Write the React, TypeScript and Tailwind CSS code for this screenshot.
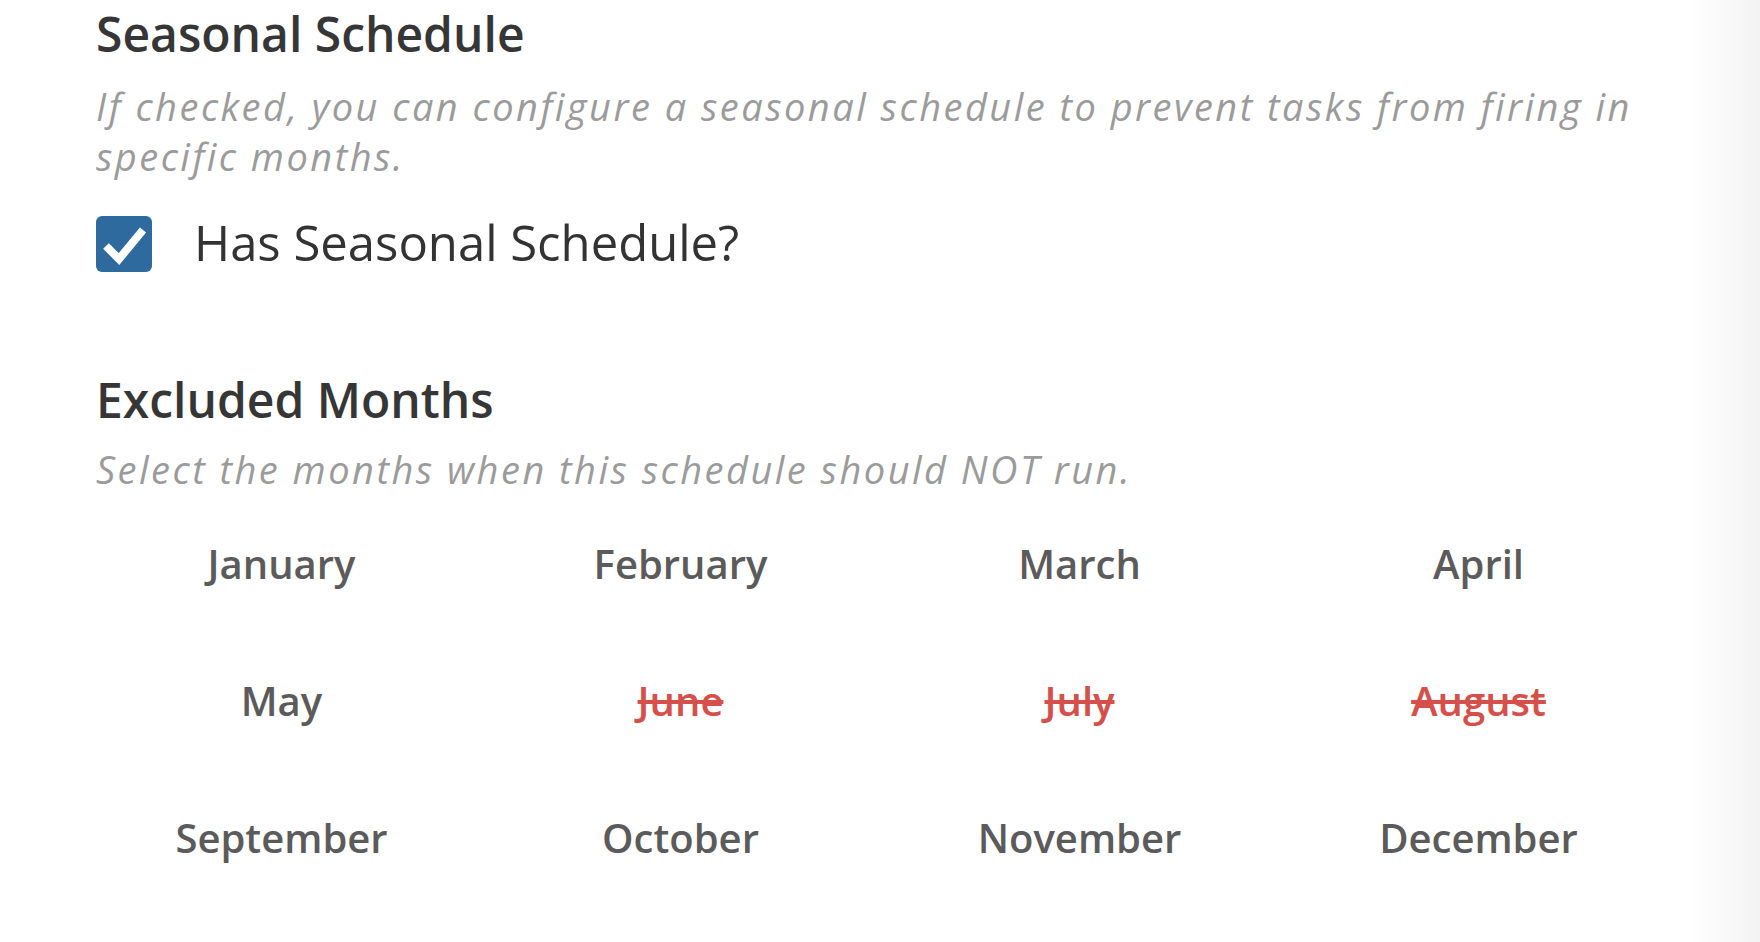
import { useState } from "react";

const MONTHS = [
  "January",
  "February",
  "March",
  "April",
  "May",
  "June",
  "July",
  "August",
  "September",
  "October",
  "November",
  "December",
] as const;

const FONT = {
  fontFamily: '"Avenir Next", "Open Sans", "Noto Sans", sans-serif',
};

function Checkbox({ checked, onChange }: { checked: boolean; onChange: (v: boolean) => void }) {
  return (
    <button
      type="button"
      aria-pressed={checked}
      onClick={() => onChange(!checked)}
      className={
        checked
          ? "flex size-[56px] shrink-0 items-center justify-center rounded-[6px] bg-[#2e6a9e]"
          : "flex size-[56px] shrink-0 items-center justify-center rounded-[6px] border-2 border-[#bbb] bg-white"
      }
    >
      {checked && (
        <svg viewBox="0 0 56 56" className="size-[56px]" aria-hidden>
          <polyline
            points="10,30 23,43 47,14"
            fill="none"
            stroke="#fff"
            strokeWidth={8}
            strokeLinejoin="miter"
          />
        </svg>
      )}
    </button>
  );
}

export default function App() {
  const [hasSeasonal, setHasSeasonal] = useState(true);
  const [excluded, setExcluded] = useState<string[]>(["June", "July", "August"]);

  const toggleMonth = (m: string) =>
    setExcluded((prev) => (prev.includes(m) ? prev.filter((x) => x !== m) : [...prev, m]));

  return (
    <div className="relative min-h-screen overflow-hidden bg-white" style={FONT}>
      <div className="px-[96px] pt-[6px]">
        <h2 className="text-[48px] leading-[56px] font-semibold text-[#363636]">Seasonal Schedule</h2>
        <p className="mt-[19px] text-[38px] leading-[50px] tracking-[0.065em] italic text-[#9b9b9b]">
          If checked, you can configure a seasonal schedule to prevent tasks from firing in specific months.
        </p>

        <label className="mt-[33px] flex items-center gap-[42px]">
          <Checkbox checked={hasSeasonal} onChange={setHasSeasonal} />
          <span className="pb-[4px] text-[49px] leading-[56px] text-[#333]">Has Seasonal Schedule?</span>
        </label>

        {hasSeasonal && (
          <>
            <h2 className="mt-[98px] text-[48px] leading-[56px] font-semibold text-[#363636]">Excluded Months</h2>
            <p className="mt-[16px] text-[38px] leading-[50px] tracking-[0.065em] italic text-[#9b9b9b]">
              Select the months when this schedule should NOT run.
            </p>

            <div className="-mx-[14px] mt-[1px] grid grid-cols-4">
              {MONTHS.map((m) => {
                const off = excluded.includes(m);
                return (
                  <button
                    key={m}
                    type="button"
                    onClick={() => toggleMonth(m)}
                    className={
                      off
                        ? "py-[44.5px] text-center text-[40px] leading-[48px] font-semibold text-[#d5504a] line-through decoration-[4px]"
                        : "py-[44.5px] text-center text-[40px] leading-[48px] font-semibold text-[#5b5b5b]"
                    }
                  >
                    {m}
                  </button>
                );
              })}
            </div>
          </>
        )}
      </div>

      {/* panel edge shadow */}
      <div className="pointer-events-none absolute inset-y-0 right-0 w-[70px] bg-linear-to-r from-white to-[#f3f3f3]" />
    </div>
  );
}
